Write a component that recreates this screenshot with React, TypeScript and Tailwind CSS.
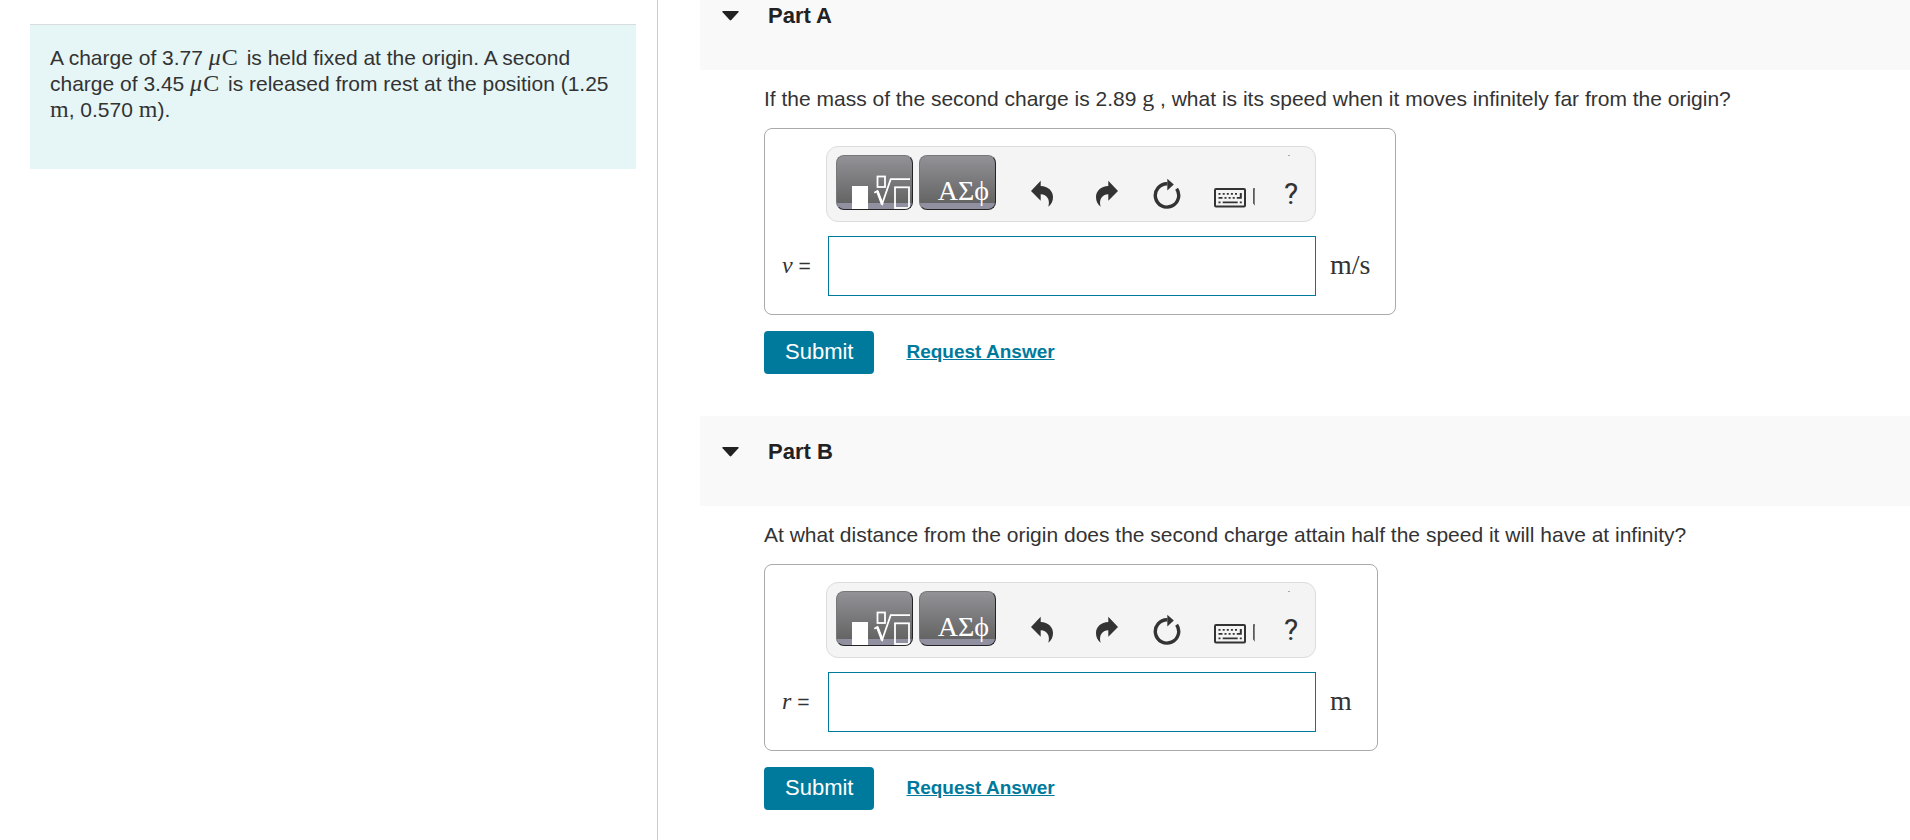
import type { ReactNode } from "react";

function Math({ children, italic }: { children: ReactNode; italic?: boolean }) {
	return (
		<span
			className={
				italic
					? "font-['Liberation_Serif',serif] text-2xl leading-none italic"
					: "font-['Liberation_Serif',serif] text-2xl leading-none"
			}
		>
			{children}
		</span>
	);
}

function MicroCoulomb() {
	return (
		<span className="mr-[3px] whitespace-nowrap">
			<Math>
				<i className="mr-px">μ</i>C
			</Math>
		</span>
	);
}

function TemplatesIcon() {
	return (
		<svg width="75" height="53" viewBox="1 1 75 53" fill="none" stroke="#fff" aria-hidden="true">
			<rect x="16" y="31" width="16" height="23" fill="#fff" stroke="none" />
			<rect x="41.5" y="21.5" width="7.5" height="10.5" strokeWidth="1.8" />
			<path d="M38.3 37.8L41.3 36L46.3 48.5L54.7 24.2H74" strokeWidth="1.8" />
			<path d="M41.3 36L46.3 49.5" strokeWidth="2.6" />
			<rect x="59" y="32.3" width="14" height="20.7" strokeWidth="1.8" />
		</svg>
	);
}

const arrowPath =
	"M5 13L14.7 2.7V8C22 8 27 13 27 19C27 23 25.5 26.5 22.3 28.7C24.5 22 21 16.5 14.7 16.3V22.7Z";

function UndoIcon() {
	return (
		<svg width="32" height="32" viewBox="0 0 32 32" fill="currentColor" aria-hidden="true">
			<path d={arrowPath} />
		</svg>
	);
}

function RedoIcon() {
	return (
		<svg width="32" height="32" viewBox="0 0 32 32" fill="currentColor" aria-hidden="true">
			<path d={arrowPath} transform="translate(32 0) scale(-1 1)" />
		</svg>
	);
}

function ResetIcon() {
	return (
		<svg width="32" height="32" viewBox="0 0 32 32" fill="none" aria-hidden="true">
			<path
				d="M25.6 10.7A11.7 11.7 0 1 1 16.3 5.7"
				stroke="currentColor"
				strokeWidth="3.4"
			/>
			<path d="M16.3 0.7L22.8 6.6L16.3 12.6Z" fill="currentColor" />
		</svg>
	);
}

function KeyboardIcon() {
	return (
		<svg width="42" height="32" viewBox="0 0 42 32" fill="currentColor" aria-hidden="true">
			<rect x="1" y="11" width="30" height="17.4" rx="1" fill="none" stroke="currentColor" strokeWidth="2" />
			<path d="M4.5 15h2v1.8h-2zM8.7 15h2v1.8h-2zM12.8 15h2v1.8h-2zM16.9 15h2v1.8h-2zM21 15h2v1.8h-2z" />
			<path d="M4.5 19h4v1.8h-4zM10.5 19h2v1.8h-2zM14.6 19h2v1.8h-2zM18.7 19h2v1.8h-2zM22.8 19h3V15h2v5.8h-5z" />
			<path d="M4.5 23.5h2v1.8h-2zM8.7 23.5h15v1.8h-15zM25.8 23.5h2v1.8h-2z" />
			<path d="M39.2 10.3H41L40.6 12V26L41 27.8L39.2 25.5Z" />
		</svg>
	);
}

const keyClass =
	"h-[55px] w-[77px] overflow-hidden rounded-lg border border-t-[#77777a] border-l-[#77777a] border-r-[#242424] border-b-[#242424] bg-[linear-gradient(#929297_0,#646464_47px,#9090a0_47px,#9090a0_100%)]";

function Toolbar() {
	return (
		<div className="relative flex h-[76px] items-end rounded-xl border border-[#dcdcdc] bg-[#f4f4f4] px-[9px] pb-[11px] text-[#333]">
			<button type="button" aria-label="Templates" className={keyClass}>
				<TemplatesIcon />
			</button>
			<button
				type="button"
				aria-label="Symbols"
				className={`${keyClass} ml-1.5 pt-4 pr-1.5 text-right font-['Liberation_Serif',serif] text-[28px] leading-8 text-white`}
			>
				ΑΣϕ
			</button>
			<button type="button" aria-label="Undo" className="ml-[30px]">
				<UndoIcon />
			</button>
			<button type="button" aria-label="Redo" className="ml-[33px]">
				<RedoIcon />
			</button>
			<button type="button" aria-label="Reset" className="ml-7">
				<ResetIcon />
			</button>
			<button type="button" aria-label="Keyboard shortcuts" className="ml-[31px]">
				<KeyboardIcon />
			</button>
			<button type="button" aria-label="Help" className="ml-7 font-[Roboto,sans-serif] text-[30px] leading-8">
				?
			</button>
			<span className="absolute top-2 right-[25px] h-px w-0.5 bg-[#aaa]" />
		</div>
	);
}

type PartProps = {
	id: string;
	title: string;
	question: ReactNode;
	variable: string;
	unit: string;
};

function Part({ id, title, question, variable, unit }: PartProps) {
	return (
		<section className="pb-[42px]">
			{/* Header */}
			<div className="h-[90px] bg-[#f9f9f9] pt-6 pl-[22px]">
				<button type="button" aria-expanded="true" className="flex items-center gap-[29px] text-[#222]">
					<svg width="17" height="10" viewBox="0 0 17 10" fill="currentColor" aria-hidden="true">
						<path d="M1 0H16Q17.2 .3 16.4 1.3L9.3 9Q8.5 9.8 7.7 9L.6 1.3Q-.2 .3 1 0Z" />
					</svg>
					<h2 className="text-[22px] leading-6 font-bold">{title}</h2>
				</button>
			</div>

			<div className="pt-4 pl-16">
				<p className="text-[21px] leading-[26px]">{question}</p>

				{/* Answer box */}
				<div className="mt-4 inline-grid grid-cols-[auto_490px_auto] items-center gap-y-3.5 rounded-lg border border-[#aaa] pt-[17px] pr-[25px] pb-[18px] pl-[17px] align-top">
					<div className="col-start-2">
						<Toolbar />
					</div>
					<label htmlFor={id} className="col-start-1 w-11 text-[21px] leading-[26px]">
						<Math italic>{variable}</Math> =
					</label>
					<input
						id={id}
						type="text"
						className="ml-0.5 h-[60px] border border-[#007a9c] bg-white px-2 text-[21px] outline-none"
					/>
					<span className="pb-0.5 pl-3.5 font-['Liberation_Serif',serif] text-[28px] leading-8">
						{unit}
					</span>
				</div>

				{/* Actions */}
				<div className="mt-4 flex items-center gap-8">
					<button type="button" className="h-[43px] rounded bg-[#007a9c] px-[21px] pb-0.5 text-[22px] text-white">
						Submit
					</button>
					<a href="#request-answer" className="text-[19px] font-bold text-[#007a9c] underline">
						Request Answer
					</a>
				</div>
			</div>
		</section>
	);
}

export default function App() {
	return (
		<div className="flex min-h-screen overflow-hidden bg-white font-['Liberation_Sans',Arial,sans-serif] text-[#333]">
			{/* Problem statement */}
			<aside className="w-[34.45%] shrink-0 border-r border-[#c3cdd6] pt-6 pr-[21px] pl-[30px]">
				<div className="min-h-[145px] border-t border-[#d8dcdc] bg-[#e6f6f7] px-5 pt-5 text-[21px] leading-[26px]">
					A charge of 3.77 <MicroCoulomb /> is held fixed at the origin. A second charge of 3.45{" "}
					<MicroCoulomb /> is released from rest at the position (1.25 <Math>m</Math>, 0.570{" "}
					<Math>m</Math>).
				</div>
			</aside>

			<main className="-mt-5 min-w-0 flex-1 pl-[42px]">
				<Part
					id="speed"
					title="Part A"
					question={
						<>
							If the mass of the second charge is 2.89 <Math>g</Math> , what is its speed when it
							moves infinitely far from the origin?
						</>
					}
					variable="v"
					unit="m/s"
				/>
				<Part
					id="distance"
					title="Part B"
					question="At what distance from the origin does the second charge attain half the speed it will have at infinity?"
					variable="r"
					unit="m"
				/>
			</main>
		</div>
	);
}
